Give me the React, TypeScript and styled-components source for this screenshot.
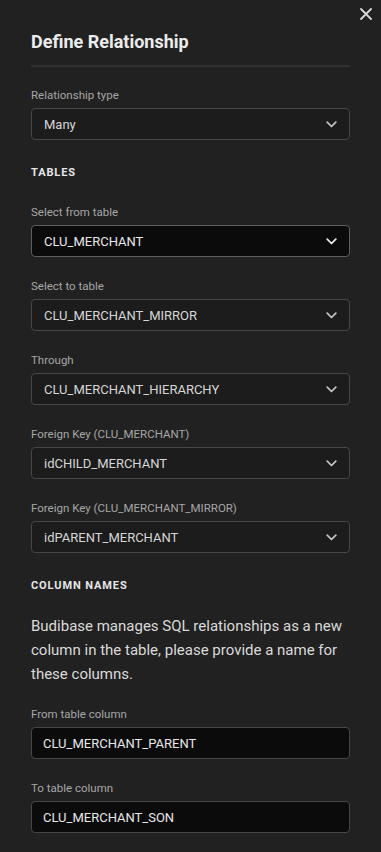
import React from "react";
import styled, { createGlobalStyle } from "styled-components";

const Global = createGlobalStyle`
  html, body { margin: 0; padding: 0; background: #212121; }
  body { font-family: Roboto, "Noto Sans", sans-serif; -webkit-font-smoothing: antialiased; }
`;

const Panel = styled.div`
  position: relative;
  width: 381px;
  min-height: 852px;
  box-sizing: border-box;
  background: #212121;
  padding: 29px 31px 20px 31px;
  display: flex;
  flex-direction: column;
`;

const Close = styled.button`
  position: absolute;
  top: 7px;
  right: 8px;
  width: 14px;
  height: 14px;
  padding: 0;
  border: none;
  background: transparent;
  color: #d8d8d8;
  display: flex;
  align-items: center;
  justify-content: center;
`;

const Title = styled.h1`
  margin: 0;
  font-size: 18px;
  font-weight: 700;
  color: #ececec;
  line-height: 26px;
`;

const Divider = styled.div`
  height: 2px;
  background: #303030;
  margin: 10px 0 20px;
`;

const Field = styled.div`
  display: flex;
  flex-direction: column;
  margin-bottom: 21px;
`;

const Label = styled.label`
  font-size: 11.5px;
  color: #a6a6a6;
  line-height: 16px;
  margin-bottom: 5px;
`;

const Box = styled.div<{ $active?: boolean; $input?: boolean }>`
  height: 32px;
  box-sizing: border-box;
  border-radius: 4px;
  border: 1px solid ${(p) => (p.$active ? "#5e5e5e" : "#464646")};
  background: ${(p) => (p.$active || p.$input ? "#0b0b0b" : "#1c1c1c")};
  display: flex;
  align-items: center;
  padding: 0 ${(p) => (p.$input ? "11px" : "12px")};
  color: ${(p) => (p.$active || p.$input ? "#e8e8e8" : "#d6d6d6")};
  font-size: 13px;
`;

const Value = styled.span`
  flex: 1;
`;

const Chevron = styled.svg<{ $active?: boolean }>`
  width: 11px;
  height: 7px;
  color: ${(p) => (p.$active ? "#f0f0f0" : "#c4c4c4")};
`;

const Heading = styled.h2`
  margin: 5px 0 24px;
  font-size: 11px;
  font-weight: 700;
  letter-spacing: 0.9px;
  color: #e6e6e6;
  line-height: 14px;
`;

const Paragraph = styled.p`
  margin: -3px 0 20px;
  font-size: 15px;
  line-height: 24px;
  color: #dadada;
`;

function Select({ label, value, active }: { label: string; value: string; active?: boolean }) {
  return (
    <Field>
      <Label>{label}</Label>
      <Box $active={active}>
        <Value>{value}</Value>
        <Chevron $active={active} viewBox="0 0 11 7">
          <path d="M1.2 1.2 L5.5 5.5 L9.8 1.2" fill="none" stroke="currentColor" strokeWidth="1.7" strokeLinecap="round" strokeLinejoin="round" />
        </Chevron>
      </Box>
    </Field>
  );
}

function TextField({ label, value }: { label: string; value: string }) {
  return (
    <Field>
      <Label>{label}</Label>
      <Box $input>
        <Value>{value}</Value>
      </Box>
    </Field>
  );
}

export default function App() {
  return (
    <>
      <Global />
      <Panel>
        <Close aria-label="Close">
          <svg width="12" height="12" viewBox="0 0 12 12">
            <path d="M1 1 L11 11 M11 1 L1 11" stroke="currentColor" strokeWidth="1.8" strokeLinecap="round" />
          </svg>
        </Close>
        <Title>Define Relationship</Title>
        <Divider />
        <Select label="Relationship type" value="Many" />
        <Heading>TABLES</Heading>
        <Select label="Select from table" value="CLU_MERCHANT" active />
        <Select label="Select to table" value="CLU_MERCHANT_MIRROR" />
        <Select label="Through" value="CLU_MERCHANT_HIERARCHY" />
        <Select label="Foreign Key (CLU_MERCHANT)" value="idCHILD_MERCHANT" />
        <Select label="Foreign Key (CLU_MERCHANT_MIRROR)" value="idPARENT_MERCHANT" />
        <Heading>COLUMN NAMES</Heading>
        <Paragraph>
          Budibase manages SQL relationships as a new column in the table, please provide a name for these columns.
        </Paragraph>
        <TextField label="From table column" value="CLU_MERCHANT_PARENT" />
        <TextField label="To table column" value="CLU_MERCHANT_SON" />
      </Panel>
    </>
  );
}
